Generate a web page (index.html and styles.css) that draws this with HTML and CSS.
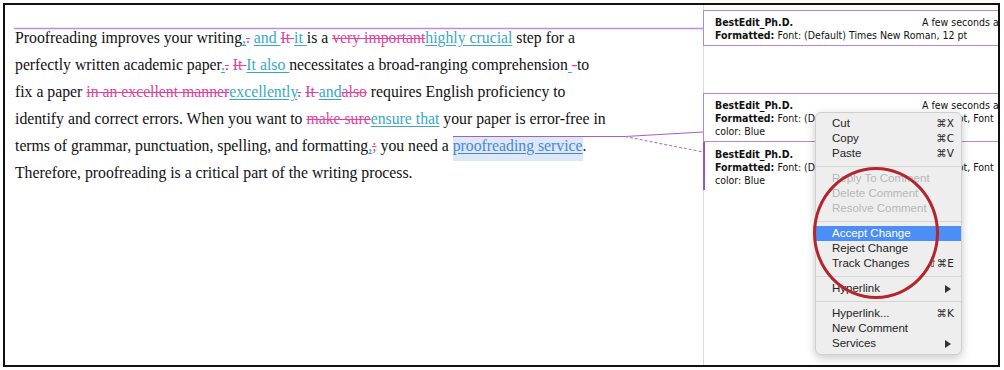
FILE: index.html
```html
<!DOCTYPE html>
<html lang="en">
<head>
<meta charset="utf-8">
<title>Track changes</title>
<link rel="stylesheet" href="styles.css">
</head>
<body>
<div class="frame">
  <div class="doc">
    <p class="para">
      Proofreading improves your writing<ins class="ins">,</ins><del class="del">.</del> <ins class="ins">and </ins><del class="del">It </del><ins class="ins">it </ins>is a <del class="del">very important</del><ins class="ins">highly crucial</ins> step for a<br>
      perfectly written academic paper<ins class="ins">.</ins><del class="del">.</del> <del class="del">It </del><ins class="ins">It also </ins>necessitates a broad-ranging comprehension<ins class="ins"> </ins><del class="del">-</del>to<br>
      fix a paper <del class="del">in an excellent manner</del><ins class="ins">excellently</ins><del class="del">.</del> <del class="del">It </del><ins class="ins">and</ins><del class="del">also</del> requires English proficiency to<br>
      identify and correct errors. When you want to <del class="del">make sure</del><ins class="ins">ensure that</ins> your paper is error-free in<br>
      terms of grammar, punctuation, spelling, and formatting<ins class="ins">,</ins><del class="del">;</del> you need a <span class="link">proofreading service</span>.<br>
      Therefore, proofreading is a critical part of the writing process.
    </p>
  </div>
  <div class="panel">
    <div class="cmt cmt-first">
      <div class="cmt-head"><b>BestEdit_Ph.D.</b><span class="cmt-time">A few seconds ago</span></div>
      <div class="cmt-line"><b>Formatted:</b> Font: (Default) Times New Roman, 12 pt</div>
    </div>
    <div class="cmt cmt-second">
      <div class="cmt-head"><b>BestEdit_Ph.D.</b><span class="cmt-time">A few seconds ago</span></div>
      <div class="cmt-line"><b>Formatted:</b> Font: (Default) Times New Roman, 12 pt, Font</div>
      <div class="cmt-line">color: Blue</div>
    </div>
    <div class="cmt-active">
      <div class="cmt-head"><b>BestEdit_Ph.D.</b></div>
      <div class="cmt-line"><b>Formatted:</b> Font: (Default) Times New Roman, 12 pt, Font</div>
      <div class="cmt-line">color: Blue</div>
    </div>
  </div>

  <svg class="connectors" width="993" height="360" viewBox="0 0 993 360">
    <line x1="9" y1="23.5" x2="698" y2="23.5" stroke="#c28bd8" stroke-width="1.3"/>
    <polyline points="448,131.5 620,131.5 698,127" fill="none" stroke="#a55fc2" stroke-width="1.2"/>
    <line x1="620" y1="131.5" x2="698" y2="147" stroke="#b77ad0" stroke-width="1.2" stroke-dasharray="3 2"/>
  </svg>

  <div class="menu">
    <div class="item"><span>Cut</span><span class="key">⌘X</span></div>
    <div class="item"><span>Copy</span><span class="key">⌘C</span></div>
    <div class="item"><span>Paste</span><span class="key">⌘V</span></div>
    <div class="sep"></div>
    <div class="item off"><span>Reply To Comment</span></div>
    <div class="item off"><span>Delete Comment</span></div>
    <div class="item off"><span>Resolve Comment</span></div>
    <div class="sep"></div>
    <div class="item sel"><span>Accept Change</span></div>
    <div class="item"><span>Reject Change</span></div>
    <div class="item"><span>Track Changes</span><span class="key">⇧⌘E</span></div>
    <div class="sep"></div>
    <div class="item"><span>Hyperlink</span><svg class="arrow" width="6" height="8" viewBox="0 0 6 8"><path d="M0 0L6 4L0 8Z" fill="#333"/></svg></div>
    <div class="sep"></div>
    <div class="item"><span>Hyperlink...</span><span class="key">⌘K</span></div>
    <div class="item"><span>New Comment</span></div>
    <div class="item"><span>Services</span><svg class="arrow" width="6" height="8" viewBox="0 0 6 8"><path d="M0 0L6 4L0 8Z" fill="#333"/></svg></div>
  </div>

  <div class="ring"></div>
</div>
</body>
</html>
```

FILE: styles.css
```css
html, body {
  margin: 0;
  padding: 0;
  background: #ffffff;
}

.frame {
  position: relative;
  box-sizing: border-box;
  margin: 3px 0 0 3px;
  width: 997px;
  height: 364px;
  border: 2px solid #111111;
  display: flex;
  overflow: hidden;
  background: #ffffff;
}

.doc {
  flex: 0 0 698px;
  box-sizing: border-box;
  padding: 19px 0 0 10px;
}

.para {
  margin: 0;
  font-family: "Liberation Serif", "Times New Roman", serif;
  font-size: 15.75px;
  line-height: 27px;
  color: #111111;
  white-space: nowrap;
}

.ins {
  color: #3aa7c3;
  text-decoration: underline;
  text-decoration-color: #3aa7c3;
  text-underline-offset: 2px;
}

.del {
  color: #e0439a;
  text-decoration: line-through;
  text-decoration-color: #e0439a;
}

.link {
  color: #4a86d4;
  text-decoration: underline;
  text-underline-offset: 2px;
  background: #dce8f8;
  padding: 0 0 7px 0;
}

.panel {
  flex: 1 1 auto;
  min-width: 0;
  box-shadow: inset 1px 0 0 #d9d9d9;
  font-family: "DejaVu Sans Condensed", "DejaVu Sans", sans-serif;
  font-size: 10.5px;
  line-height: 13px;
  color: #111111;
  white-space: nowrap;
}

.cmt {
  width: 330px;
  box-sizing: border-box;
  border: 1px solid #b985cf;
  padding: 5px 0 3px 11px;
  background: #ffffff;
}

.cmt-first {
  margin-top: 5px;
}

.cmt-second {
  margin-top: 47px;
}

.cmt-active {
  border-left: 2px solid #9a55b6;
  padding: 6px 0 3px 10px;
}

.cmt-head {
  display: grid;
  grid-template-columns: 207px auto;
}

.cmt-time {
  font-weight: normal;
}

.connectors {
  position: absolute;
  left: 0;
  top: 0;
  pointer-events: none;
}

.menu {
  position: absolute;
  left: 810px;
  top: 107px;
  width: 147px;
  box-sizing: border-box;
  padding: 3px 0 3px 0;
  background: #eeeeee;
  border: 1px solid #cfcfcf;
  border-radius: 6px;
  box-shadow: 0 3px 10px rgba(0, 0, 0, 0.22);
  font-family: "Liberation Sans", "DejaVu Sans", sans-serif;
  font-size: 11.5px;
  color: #242424;
}

.item {
  display: flex;
  justify-content: space-between;
  align-items: center;
  height: 15px;
  line-height: 15px;
  padding: 0 7px 0 16px;
}

.item.off {
  color: #b7b7b7;
}

.item.sel {
  background: #4c8df6;
  color: #ffffff;
}

.key {
  font-family: "DejaVu Sans", sans-serif;
  font-size: 10.5px;
}

.arrow {
  margin-right: 3px;
}

.sep {
  height: 10px;
  display: flex;
  align-items: center;
}

.sep::before {
  content: "";
  flex: 1;
  height: 1px;
  background: #d6d6d6;
}

.ring {
  position: absolute;
  left: 808px;
  top: 162px;
  width: 126px;
  height: 132px;
  box-sizing: border-box;
  border: 3px solid #b3262c;
  border-radius: 50%;
  pointer-events: none;
}
```
